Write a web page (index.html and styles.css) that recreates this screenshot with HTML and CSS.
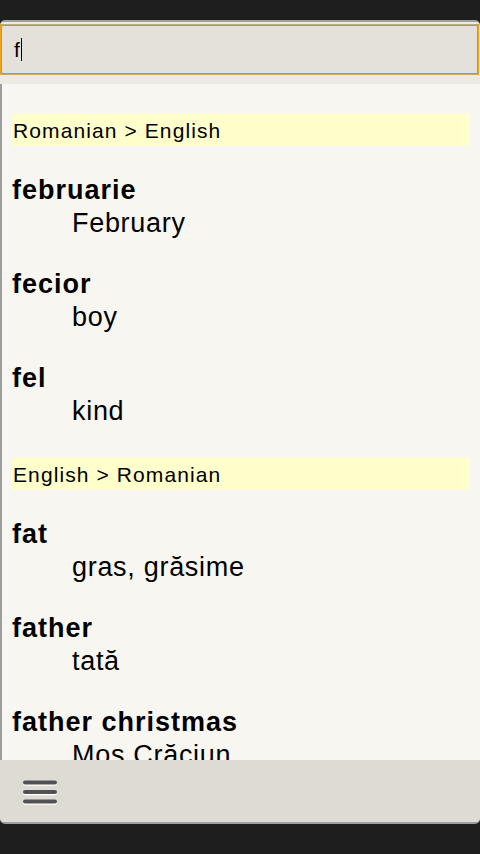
FILE: index.html
```html
<!DOCTYPE html>
<html>
<head>
<meta charset="utf-8">
<link rel="stylesheet" href="styles.css">
</head>
<body>
<div class="topbar"></div>
<div class="window">
  <div class="search-area">
    <div class="search-box"><span class="query">f</span><span class="caret"></span></div>
  </div>
  <div class="results">
    <div class="section">Romanian &gt; English</div>
    <dl class="entry"><dt>februarie</dt><dd>February</dd></dl>
    <dl class="entry"><dt>fecior</dt><dd>boy</dd></dl>
    <dl class="entry"><dt>fel</dt><dd>kind</dd></dl>
    <div class="section">English &gt; Romanian</div>
    <dl class="entry"><dt>fat</dt><dd>gras, grăsime</dd></dl>
    <dl class="entry"><dt>father</dt><dd>tată</dd></dl>
    <dl class="entry"><dt>father christmas</dt><dd>Moș Crăciun</dd></dl>
  </div>
  <div class="toolbar">
    <svg class="menu-icon" width="34" height="28" viewBox="0 0 34 28">
      <g stroke-linecap="round" fill="none">
        <line x1="2" y1="5.8" x2="32" y2="5.8" stroke="#ffffff" stroke-width="4"/>
        <line x1="2" y1="15.3" x2="32" y2="15.3" stroke="#ffffff" stroke-width="4"/>
        <line x1="2" y1="24.8" x2="32" y2="24.8" stroke="#ffffff" stroke-width="4"/>
        <line x1="2" y1="4.5" x2="32" y2="4.5" stroke="#525252" stroke-width="4"/>
        <line x1="2" y1="14" x2="32" y2="14" stroke="#525252" stroke-width="4"/>
        <line x1="2" y1="23.5" x2="32" y2="23.5" stroke="#525252" stroke-width="4"/>
      </g>
    </svg>
  </div>
</div>
</body>
</html>
```
FILE: styles.css
```css
html, body {
  margin: 0;
  padding: 0;
  background: #1e1e1e;
  width: 480px;
  height: 854px;
  overflow: hidden;
  font-family: "Liberation Sans", Arial, sans-serif;
  color: #000;
}
.topbar {
  height: 20px;
}
.window {
  height: 804px;
  display: flex;
  flex-direction: column;
  border-radius: 5px;
  background: #9e9e9e;
  padding: 2px 0 2px 0;
  box-sizing: border-box;
  overflow: hidden;
}
.search-area {
  background: #edeae3;
  height: 62px;
  padding: 3px 2px 0 1px;
  box-sizing: border-box;
  border-radius: 4px 4px 0 0;
}
.search-box {
  height: 49px;
  box-sizing: border-box;
  border: 1px solid #6fa3c9;
  box-shadow: 0 0 0 1px #f2a31c;
  background: #e4e1da;
  display: flex;
  align-items: center;
  padding-left: 12px;
}
.query {
  font-size: 21px;
}
.caret {
  display: inline-block;
  width: 1px;
  height: 23px;
  background: #000;
  margin-left: 1px;
}
.results {
  flex: 1;
  background: #f8f6f0;
  margin-left: 2px;
  padding: 30px 10px 0 10px;
  overflow: hidden;
}
.section {
  background: #ffffcc;
  height: 32px;
  line-height: 34px;
  font-size: 21px;
  letter-spacing: 1.1px;
  padding-left: 1px;
  margin-top: 30px;
}
.section:first-child {
  margin-top: 0;
}
.entry {
  margin: 28px 0 0 0;
}
.entry dt {
  font-weight: bold;
  font-size: 27px;
  line-height: 33px;
  letter-spacing: 1px;
}
.entry dd {
  margin: 0 0 0 60px;
  font-size: 27px;
  line-height: 33px;
  letter-spacing: 0.7px;
}
.toolbar {
  height: 62px;
  flex-shrink: 0;
  background: #dedbd4;
  border-radius: 0 0 4px 4px;
  display: flex;
  align-items: center;
  padding-left: 23px;
}
.menu-icon {
  display: block;
  margin-top: 2px;
}
```
